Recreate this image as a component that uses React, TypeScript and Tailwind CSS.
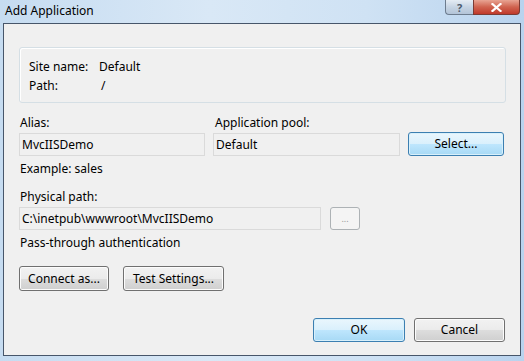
import React from "react";

const font = { fontFamily: '"Noto Sans", "Open Sans", Arial, sans-serif' };

function Btn({ children, def, className = "" }: { children: React.ReactNode; def?: boolean; className?: string }) {
  return (
    <div
      className={
        "flex items-center justify-center rounded-[3px] border text-[12px] text-black " +
        (def
          ? "border-[#3c7fb1] bg-[linear-gradient(#eaf6fd_0%,#d9f0fc_50%,#bee6fd_51%,#a7d9f5_100%)] shadow-[inset_0_0_0_1px_#d8f0fb] "
          : "border-[#707070] bg-[linear-gradient(#f2f2f2_0%,#ebebeb_50%,#dddddd_51%,#cfcfcf_100%)] shadow-[inset_0_0_0_1px_#fcfcfc] ") +
        className
      }
    >
      {children}
    </div>
  );
}

function Field({ children, className = "" }: { children: React.ReactNode; className?: string }) {
  return (
    <div className={"flex h-[23px] items-center border border-[#dadada] bg-[#f0f0f0] pl-[2px] text-[12px] text-black " + className}>
      {children}
    </div>
  );
}

export default function App() {
  return (
    <div
      className="flex h-[361px] w-[524px] flex-col overflow-hidden bg-[linear-gradient(90deg,#c6dcf1_0%,#d9e8f6_40%,#cfe2f4_70%,#b9d3ee_100%)]"
      style={font}
    >
      <div className="flex h-[23px] shrink-0 items-start justify-between">
        <div className="pl-[5px] pt-[2px] text-[12px] text-black">Add Application</div>
        <div className="mr-[4px] flex">
          <div className="flex h-[15px] w-[28px] items-center justify-center rounded-bl-[4px] border border-r-0 border-t-0 border-[#6d7c8e] bg-[linear-gradient(#e5ecf4,#c6d4e3_50%,#b3c4d8)] text-[11px] font-bold leading-none text-[#4c5b6e]">
            ?
          </div>
          <div className="flex h-[15px] w-[47px] items-center justify-center rounded-br-[4px] border border-t-0 border-[#7b3b34] bg-[linear-gradient(#e8a493,#d0634f_50%,#c0392b)]">
            <svg width="11" height="9" viewBox="0 0 11 9">
              <path d="M1.5 1 L9.5 8 M9.5 1 L1.5 8" stroke="#ffffff" strokeWidth="2.2" strokeLinecap="square" />
            </svg>
          </div>
        </div>
      </div>
      <div className="ml-[3px] flex h-[333px] w-[518px] flex-col border border-[#47566a] bg-[#f0f0f0] text-[12px] text-black">
        <div className="ml-[15px] mt-[23px] flex h-[56px] w-[487px] flex-col rounded-[3px] border border-[#d5dfe5] pl-[9px] pt-[9px] shadow-[inset_1px_1px_0_#ffffff]">
          <div className="flex h-[19px] items-center">
            <span className="w-[70px]">Site name:</span>
            <span>Default</span>
          </div>
          <div className="flex h-[19px] items-center">
            <span className="w-[72px]">Path:</span>
            <span>/</span>
          </div>
        </div>
        <div className="ml-[15px] mt-[12px] flex">
          <div className="flex w-[186px] flex-col">
            <div className="pl-[1px] leading-[16px]">Alias:</div>
            <Field className="mt-[2px]">MvcIISDemo</Field>
          </div>
          <div className="ml-[8px] flex w-[187px] flex-col">
            <div className="pl-[2px] leading-[16px]">Application pool:</div>
            <Field className="mt-[2px]">Default</Field>
          </div>
          <div className="ml-[8px] flex flex-col justify-end">
            <Btn def className="h-[24px] w-[96px]">Select...</Btn>
          </div>
        </div>
        <div className="ml-[16px] mt-[5px] leading-[16px]">Example: sales</div>
        <div className="ml-[16px] mt-[12px] leading-[16px]">Physical path:</div>
        <div className="ml-[15px] mt-[2px] flex items-center">
          <Field className="w-[302px]">C:\inetpub\wwwroot\MvcIISDemo</Field>
          <div className="ml-[9px] flex h-[23px] w-[30px] items-center justify-center rounded-[3px] border border-[#adb2b5] bg-[#f4f4f4] text-[9px] text-[#9a9a9a]">
            ...
          </div>
        </div>
        <div className="ml-[16px] mt-[5px] leading-[16px]">Pass-through authentication</div>
        <div className="ml-[15px] mt-[15px] flex">
          <Btn className="h-[25px] w-[90px]">Connect as...</Btn>
          <Btn className="ml-[14px] h-[25px] w-[101px]">Test Settings...</Btn>
        </div>
        <div className="ml-[309px] mt-[27px] flex">
          <Btn def className="h-[24px] w-[92px]">OK</Btn>
          <Btn className="ml-[9px] h-[24px] w-[91px]">Cancel</Btn>
        </div>
      </div>
    </div>
  );
}
